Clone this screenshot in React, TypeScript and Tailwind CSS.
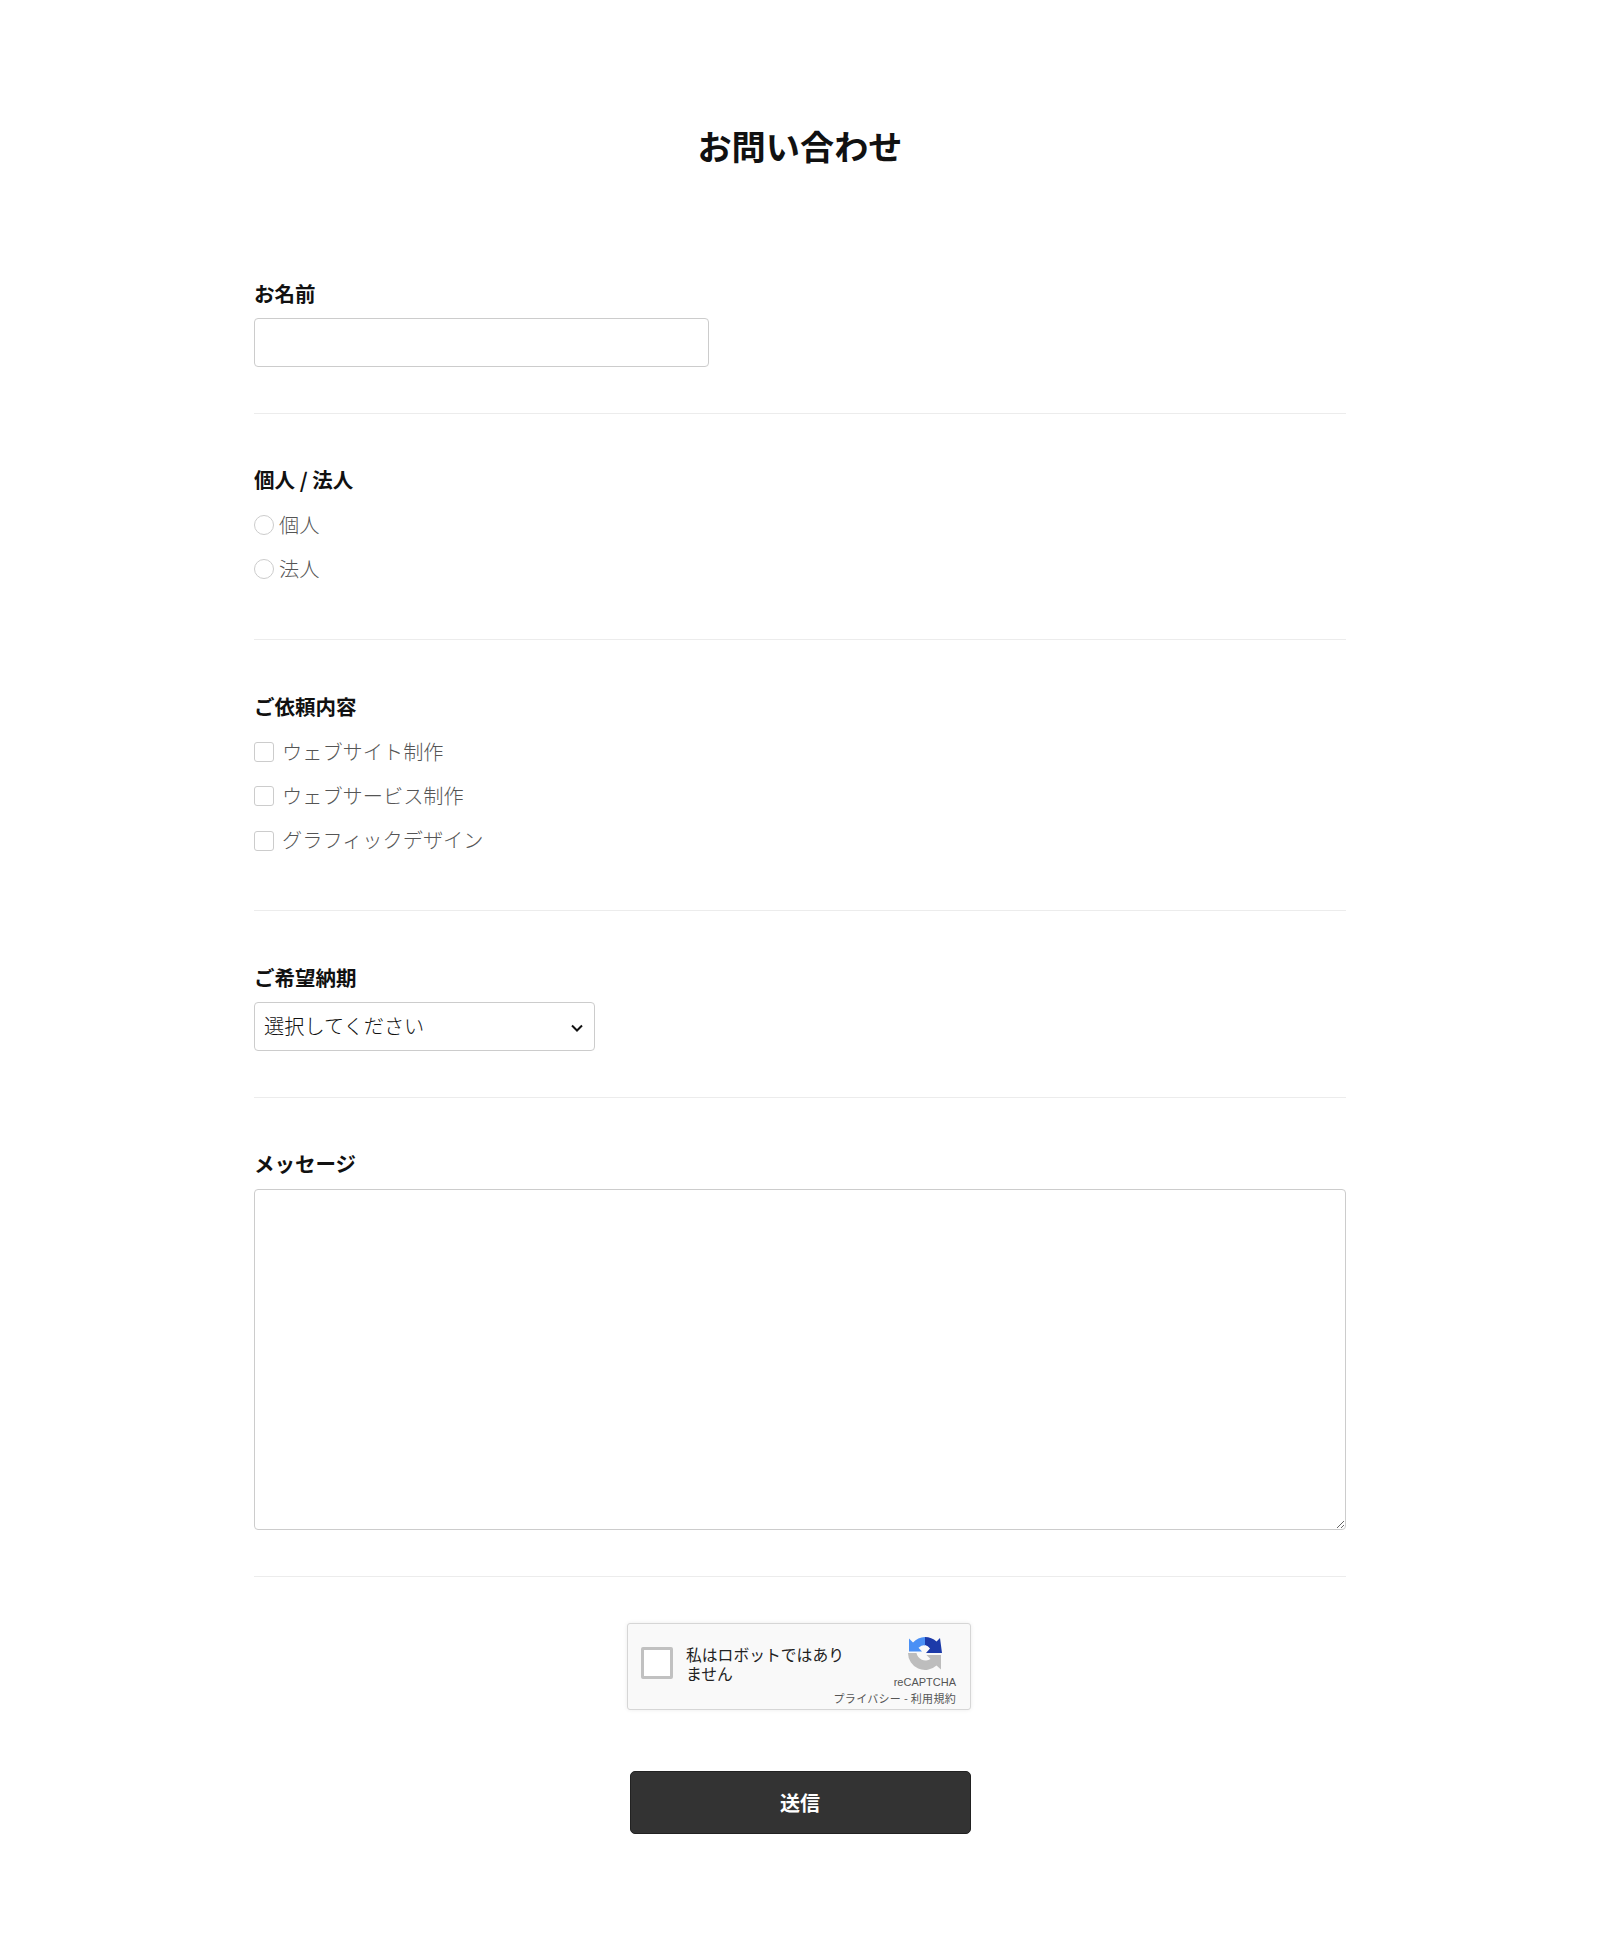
import { ReactNode } from "react";

const font = { fontFamily: '"Noto Sans CJK JP", sans-serif' };

function Label({ children }: { children: ReactNode }) {
  return <div className="h-7 text-[20.5px] leading-[26px] font-bold text-[#111]">{children}</div>;
}

function Section({ children, className }: { children: ReactNode; className?: string }) {
  return <section className={`border-b border-[#ececec] ${className || ""}`}>{children}</section>;
}

// three chasing arrows, 36px box
function RecaptchaLogo() {
  return (
    <svg viewBox="0 0 36 36" className="h-[36px] w-[36px]">
      <path d="M18 17V9a9 9 0 0 0-6.500 2.800L15 15.500H2V2.500l4 4A16.500 16.500 0 0 1 18 1z" fill="#4a90f5" />
      <path d="M18 1a17 17 0 0 1 11.500 4.500L33 2l2 15H19l4-4.500A9 9 0 0 0 18 9z" fill="#1c3aa9" />
      <path d="M1 17h8.500a9 9 0 0 0 14 6l-4-4h14.500v14.500l-4.500-4A17 17 0 0 1 1 17z" fill="#bdbdbd" />
    </svg>
  );
}

export default function App() {
  return (
    <div className="min-h-[1948px] bg-white" style={font}>
      <div className="mx-auto w-[1092px] pt-[123px]">
        <h1 className="h-[46px] text-center text-[34.2px] leading-[44px] font-bold text-[#111]">お問い合わせ</h1>

        <Section className="mt-[111px] pb-[46px]">
          <Label>お名前</Label>
          <div className="mt-[10px] h-[49px] w-[455px] rounded-[4px] border border-[#ccc]" />
        </Section>

        <Section className="pt-[52px] pb-[48px]">
          <Label>個人 / 法人</Label>
          <div className="mt-[9px]">
            {["個人", "法人"].map((t) => (
              <div key={t} className="flex h-[44px] items-center">
                <span className="h-5 w-5 rounded-full border border-[#ccc]" />
                <span className="ml-[5px] text-[20.2px] font-light text-[#555]">{t}</span>
              </div>
            ))}
          </div>
        </Section>

        <Section className="pt-[53px] pb-[47px]">
          <Label>ご依頼内容</Label>
          <div className="mt-[9px]">
            {["ウェブサイト制作", "ウェブサービス制作", "グラフィックデザイン"].map((t) => (
              <div key={t} className="flex h-[44.3px] items-center">
                <span className="h-5 w-5 rounded-[3px] border border-[#ccc]" />
                <span className="ml-[8px] -mt-[1px] text-[20.2px] font-light text-[#555]">{t}</span>
              </div>
            ))}
          </div>
        </Section>

        <Section className="pt-[53px] pb-[46px]">
          <Label>ご希望納期</Label>
          <div className="mt-[10px] flex h-[49px] w-[341px] items-center justify-between rounded-[4px] border border-[#ccc] pr-[11px] pl-[9px] text-[20.2px] font-light text-[#111]">
            <span className="-mt-[1px]">選択してください</span>
            <svg viewBox="0 0 12 8" className="mt-[3px] h-[8px] w-[12px]" fill="none" stroke="#111" strokeWidth="2">
              <path d="M1 1.500l5 5 5-5" />
            </svg>
          </div>
        </Section>

        <Section className="pt-[52px] pb-[46px]">
          <Label>メッセージ</Label>
          <textarea className="mt-[11px] block h-[341px] w-full rounded-[4px] border border-[#ccc]" readOnly />
        </Section>

        <div className="mt-[46px] ml-[373px] flex h-[87px] w-[344px] rounded-[3px] border border-[#d6d6d6] bg-[#f9f9f9] shadow-[0_0_4px_rgba(0,0,0,0.08)]">
          <span className="mt-[23px] ml-[13px] h-[32px] w-[32px] shrink-0 rounded-[2px] border-[3px] border-[#c1c1c1] bg-white" />
          <div className="mt-[21px] ml-[13px] w-[165px] text-[15.8px] leading-[19px] text-[#222]">私はロボットではありません</div>
          <div className="relative flex-1">
            <div className="absolute top-[12px] right-[27px]">
              <RecaptchaLogo />
            </div>
            <div className="absolute top-[50px] right-[14px] text-[11px] leading-4 text-[#555]" style={{ fontFamily: '"Liberation Sans", sans-serif' }}>reCAPTCHA</div>
            <div className="absolute top-[67px] right-[14px] text-[11px] leading-[14px] tracking-[0.3px] whitespace-nowrap text-[#555]">プライバシー - 利用規約</div>
          </div>
        </div>

        <button className="mx-auto mt-[61px] block h-[63px] w-[341px] rounded-[5px] border border-[#222] bg-[#333] pt-[2px] text-[20px] font-bold text-white">送信</button>
      </div>
    </div>
  );
}
